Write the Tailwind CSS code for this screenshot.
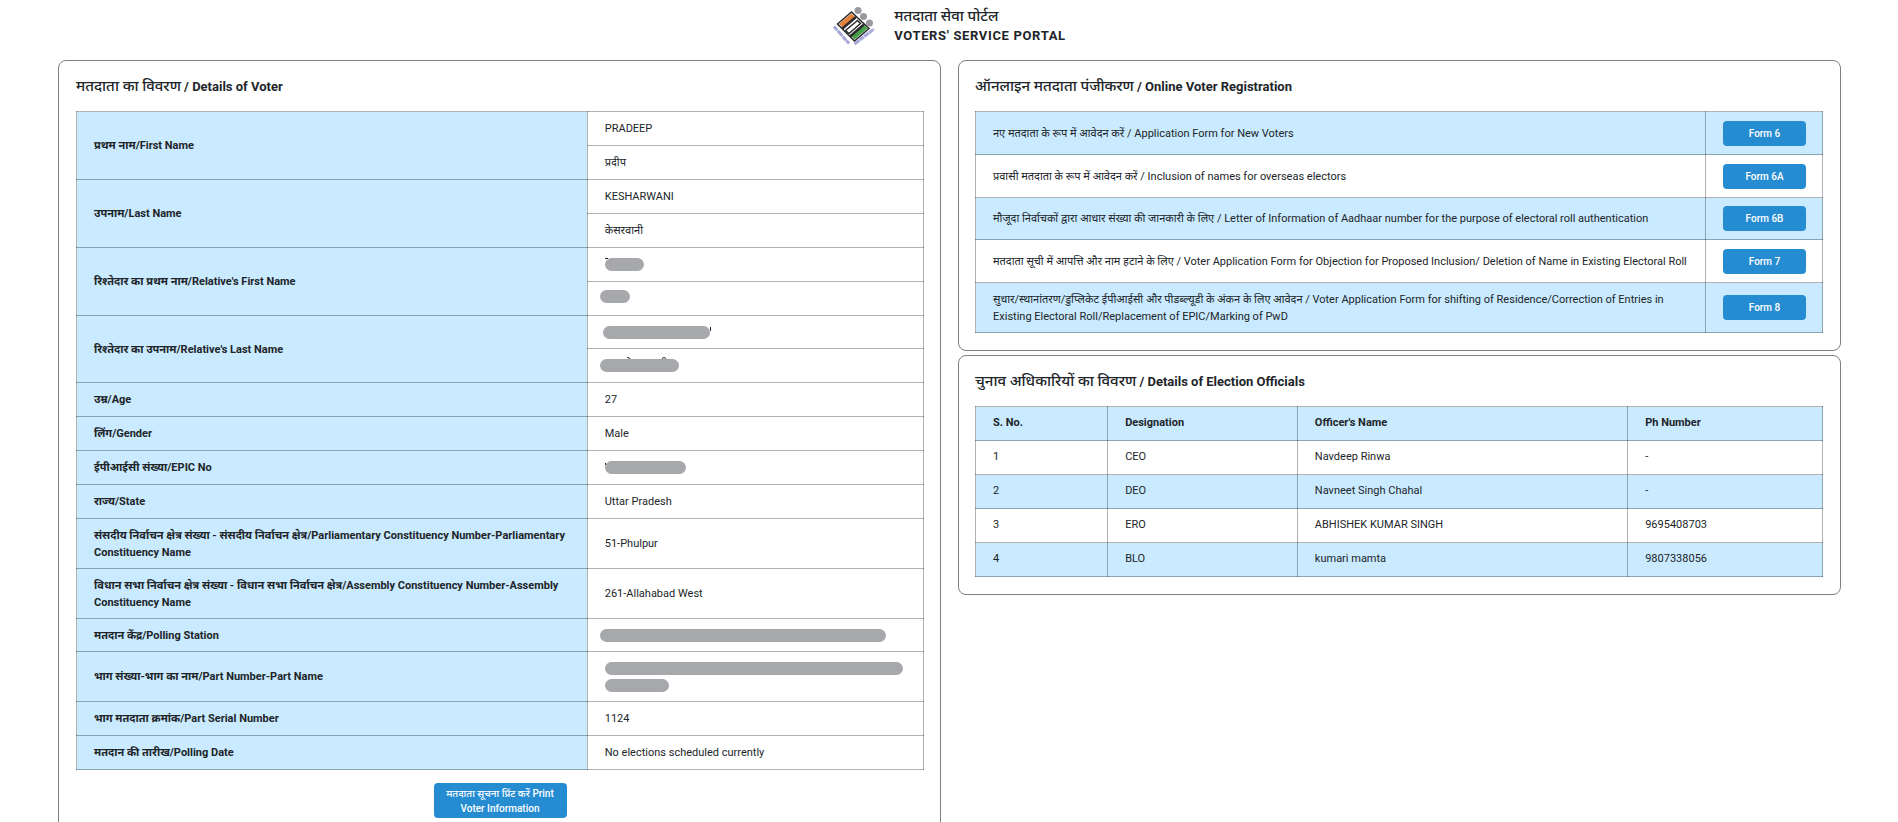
<!DOCTYPE html>
<html lang="hi">
<head>
    <meta charset="UTF-8">
    <meta name="viewport" content="width=device-width, initial-scale=1.0">
    <title>Voters' Service Portal</title>
    <script src="https://cdn.jsdelivr.net/npm/@tailwindcss/browser@4"></script>
</head>
<body class="bg-white font-[Roboto,'Noto_Sans_Devanagari','Noto_Sans',sans-serif] text-[11px] leading-[17px] text-[#212529]">
    <header class="flex items-center justify-center gap-[18px] h-[60px] pb-2">
        <svg class="w-[44px] h-[42px]" viewBox="0 0 44 42" role="img" aria-label="Election Commission of India">
            <path d="M5.500 19 19.500 7 37 23.500 22.500 36Z" fill="#fff" stroke="#2b2a2c" stroke-width="1.500"/>
            <path d="M7 19 19.500 8.500 23 12 10.500 22.500Z" fill="#e2803a"/>
            <path d="M19.500 31.500 32.500 20.500 35.500 23.500 22.500 34.500Z" fill="#43a047"/>
            <path d="M10.500 23.500 24 12M18 31.500 32 19.500" fill="none" stroke="#2b2a2c" stroke-width="2.500"/>
            <path d="M13.500 25.500 25.500 15.500 28.500 18.500 17 28.500Z" fill="#fff" stroke="#2b2a2c" stroke-width="1.500"/>
            <g fill="#97999d">
                <circle cx="26" cy="5.500" r="3.500"/>
                <circle cx="31.500" cy="11.500" r="3.500"/>
                <circle cx="37.500" cy="18" r="3.500"/>
            </g>
            <g fill="none" stroke="#a5a8d8" stroke-width="3">
                <path d="M2 21.500 17 38.500" stroke-dasharray="5 .6 7 .6"/>
                <path d="M22.500 39 42 24" stroke-dasharray="6 .5 5 .5"/>
            </g>
        </svg>
        <div class="text-[13px] leading-[20px]">
            <p class="text-[15px] leading-[20px] font-medium">मतदाता सेवा पोर्टल</p>
            <h1 class="font-bold tracking-wider">VOTERS' SERVICE PORTAL</h1>
        </div>
    </header>

    <main class="grid grid-cols-2 gap-[17px] pl-[58px] pr-[57px]">
        <section class="border border-[#808080] rounded-lg pl-[17px] pr-4 pt-4 pb-6">
            <h2 class="h-5 text-[13px] leading-5 font-bold mb-[14px]"><span class="text-[15px] leading-none font-medium">मतदाता का विवरण</span> / Details of Voter</h2>
            <table class="w-full table-fixed border-collapse [&_th]:border [&_td]:border [&_th]:border-black/30 [&_td]:border-black/30 [&_th]:bg-[#c9eaff] [&_th]:text-left [&_th]:pl-[17px] [&_td]:pl-[17px] [&_td]:pr-4 [&_th]:py-[7px] [&_td]:py-[7px] [&_tr]:h-[34px]">
                <colgroup>
                    <col class="w-[60.3%]">
                    <col>
                </colgroup>
                <tbody>
                    <tr>
                        <th scope="row" rowspan="2">प्रथम नाम/First Name</th>
                        <td>PRADEEP</td>
                    </tr>
                    <tr><td>प्रदीप</td></tr>
                    <tr>
                        <th scope="row" rowspan="2">उपनाम/Last Name</th>
                        <td>KESHARWANI</td>
                    </tr>
                    <tr><td>केसरवानी</td></tr>
                    <tr>
                        <th scope="row" rowspan="2">रिश्तेदार का प्रथम नाम/Relative's First Name</th>
                        <td>
                            <div class="relative">
                                <span class="absolute left-0 top-0 w-[3px] h-px bg-[#212529]"></span>
                                <span class="relative block w-[39px] h-[13px] rounded-full bg-[#a7a8ac]"></span>
                            </div>
                        </td>
                    </tr>
                    <tr><td><span class="block -ml-[5px] mb-1 w-[30px] h-[13px] rounded-full bg-[#a7a8ac]"></span></td></tr>
                    <tr class="!h-[33px]">
                        <th scope="row" rowspan="2">रिश्तेदार का उपनाम/Relative's Last Name</th>
                        <td>
                            <div class="relative w-[106px]">
                                <span class="absolute right-0 top-px w-px h-1 bg-[#212529]"></span>
                                <span class="relative block -ml-[2px] w-[107px] h-[13px] rounded-full bg-[#a7a8ac]"></span>
                            </div>
                        </td>
                    </tr>
                    <tr>
                        <td>
                            <div class="relative">
                                <svg class="absolute left-0 -top-[2px] w-[74px] h-1" viewBox="0 0 74 4" fill="none" stroke="#212529">
                                    <path d="M22 .5Q25 .5 26 3M57 3Q57 .5 59 .5T61 3"/>
                                </svg>
                                <span class="relative block -ml-[5px] w-[79px] h-[13px] rounded-full bg-[#a7a8ac]"></span>
                            </div>
                        </td>
                    </tr>
                    <tr>
                        <th scope="row">उम्र/Age</th>
                        <td>27</td>
                    </tr>
                    <tr>
                        <th scope="row">लिंग/Gender</th>
                        <td>Male</td>
                    </tr>
                    <tr>
                        <th scope="row">ईपीआईसी संख्या/EPIC No</th>
                        <td>
                            <div class="relative">
                                <span class="absolute left-0 top-[2px] w-px h-[2px] bg-[#212529]"></span>
                                <span class="relative block w-[81px] h-[13px] rounded-full bg-[#a7a8ac]"></span>
                            </div>
                        </td>
                    </tr>
                    <tr>
                        <th scope="row">राज्य/State</th>
                        <td>Uttar Pradesh</td>
                    </tr>
                    <tr class="!h-[50px]">
                        <th scope="row">संसदीय निर्वाचन क्षेत्र संख्या - संसदीय निर्वाचन क्षेत्र/Parliamentary Constituency Number-Parliamentary Constituency Name</th>
                        <td>51-Phulpur</td>
                    </tr>
                    <tr class="!h-[50px]">
                        <th scope="row">विधान सभा निर्वाचन क्षेत्र संख्या - विधान सभा निर्वाचन क्षेत्र/Assembly Constituency Number-Assembly Constituency Name</th>
                        <td>261-Allahabad West</td>
                    </tr>
                    <tr class="!h-[33px]">
                        <th scope="row">मतदान केंद्र/Polling Station</th>
                        <td><span class="block -ml-[5px] w-[286px] h-[13px] rounded-full bg-[#a7a8ac]"></span></td>
                    </tr>
                    <tr class="!h-[50px]">
                        <th scope="row">भाग संख्या-भाग का नाम/Part Number-Part Name</th>
                        <td>
                            <div class="grid gap-1">
                                <span class="w-[298px] h-[13px] rounded-full bg-[#a7a8ac]"></span>
                                <span class="w-[64px] h-[13px] rounded-full bg-[#a7a8ac]"></span>
                            </div>
                        </td>
                    </tr>
                    <tr>
                        <th scope="row">भाग मतदाता क्रमांक/Part Serial Number</th>
                        <td>1124</td>
                    </tr>
                    <tr>
                        <th scope="row">मतदान की तारीख/Polling Date</th>
                        <td>No elections scheduled currently</td>
                    </tr>
                </tbody>
            </table>
            <button type="button" class="block mx-auto mt-[13px] w-[133px] h-[35px] rounded bg-[#268cd2] text-white font-medium text-[10px] leading-[15px]">मतदाता सूचना प्रिंट करें Print Voter Information</button>
        </section>

        <div class="flex flex-col gap-1">
            <section class="border border-[#808080] rounded-lg pl-4 pr-[17px] pt-4 pb-[17px]">
                <h2 class="h-5 text-[13px] leading-5 font-bold mb-[14px]"><span class="text-[15px] leading-none font-medium">ऑनलाइन मतदाता पंजीकरण</span> / Online Voter Registration</h2>
                <table class="w-full table-fixed border-collapse [&_td]:border [&_td]:border-black/30 [&_td]:pl-[17px] [&_td]:pr-4 [&_td]:py-[7px] [&_tr]:h-[43px] [&_tr:nth-child(odd)]:bg-[#c9eaff]">
                    <colgroup>
                        <col>
                        <col class="w-[117px]">
                    </colgroup>
                    <tbody>
                        <tr>
                            <td>नए मतदाता के रूप में आवेदन करें / Application Form for New Voters</td>
                            <td><button type="button" class="block w-full h-[25px] rounded bg-[#268cd2] text-white font-medium text-[10px]">Form 6</button></td>
                        </tr>
                        <tr>
                            <td>प्रवासी मतदाता के रूप में आवेदन करें / Inclusion of names for overseas electors</td>
                            <td><button type="button" class="block w-full h-[25px] rounded bg-[#268cd2] text-white font-medium text-[10px]">Form 6A</button></td>
                        </tr>
                        <tr class="!h-[42px]">
                            <td>मौजूदा निर्वाचकों द्वारा आधार संख्या की जानकारी के लिए / Letter of Information of Aadhaar number for the purpose of electoral roll authentication</td>
                            <td><button type="button" class="block w-full h-[25px] rounded bg-[#268cd2] text-white font-medium text-[10px]">Form 6B</button></td>
                        </tr>
                        <tr>
                            <td>मतदाता सूची में आपत्ति और नाम हटाने के लिए / Voter Application Form for Objection for Proposed Inclusion/ Deletion of Name in Existing Electoral Roll</td>
                            <td><button type="button" class="block w-full h-[25px] rounded bg-[#268cd2] text-white font-medium text-[10px]">Form 7</button></td>
                        </tr>
                        <tr class="!h-[50px]">
                            <td>सुधार/स्थानांतरण/डुप्लिकेट ईपीआईसी और पीडब्ल्यूडी के अंकन के लिए आवेदन / Voter Application Form for shifting of Residence/Correction of Entries in Existing Electoral Roll/Replacement of EPIC/Marking of PwD</td>
                            <td><button type="button" class="block w-full h-[25px] rounded bg-[#268cd2] text-white font-medium text-[10px]">Form 8</button></td>
                        </tr>
                    </tbody>
                </table>
            </section>

            <section class="border border-[#808080] rounded-lg pl-4 pr-[17px] pt-4 pb-[17px]">
                <h2 class="h-5 text-[13px] leading-5 font-bold mb-[14px]"><span class="text-[15px] leading-none font-medium">चुनाव अधिकारियों का विवरण</span> / Details of Election Officials</h2>
                <table class="w-full table-fixed border-collapse text-left [&_th]:border [&_td]:border [&_th]:border-black/30 [&_td]:border-black/30 [&_th]:pl-[17px] [&_td]:pl-[17px] [&_th]:pb-[2px] [&_td]:pb-[2px] [&_tr]:h-[34px]">
                    <colgroup>
                        <col class="w-[15.6%]">
                        <col class="w-[22.4%]">
                        <col class="w-[39%]">
                        <col>
                    </colgroup>
                    <thead>
                        <tr class="bg-[#c9eaff]">
                            <th scope="col">S. No.</th>
                            <th scope="col">Designation</th>
                            <th scope="col">Officer's Name</th>
                            <th scope="col">Ph Number</th>
                        </tr>
                    </thead>
                    <tbody>
                        <tr>
                            <td>1</td>
                            <td>CEO</td>
                            <td>Navdeep Rinwa</td>
                            <td>-</td>
                        </tr>
                        <tr class="bg-[#c9eaff]">
                            <td>2</td>
                            <td>DEO</td>
                            <td>Navneet Singh Chahal</td>
                            <td>-</td>
                        </tr>
                        <tr>
                            <td>3</td>
                            <td>ERO</td>
                            <td>ABHISHEK KUMAR SINGH</td>
                            <td>9695408703</td>
                        </tr>
                        <tr class="bg-[#c9eaff]">
                            <td>4</td>
                            <td>BLO</td>
                            <td>kumari mamta</td>
                            <td>9807338056</td>
                        </tr>
                    </tbody>
                </table>
            </section>
        </div>
    </main>
</body>
</html>
